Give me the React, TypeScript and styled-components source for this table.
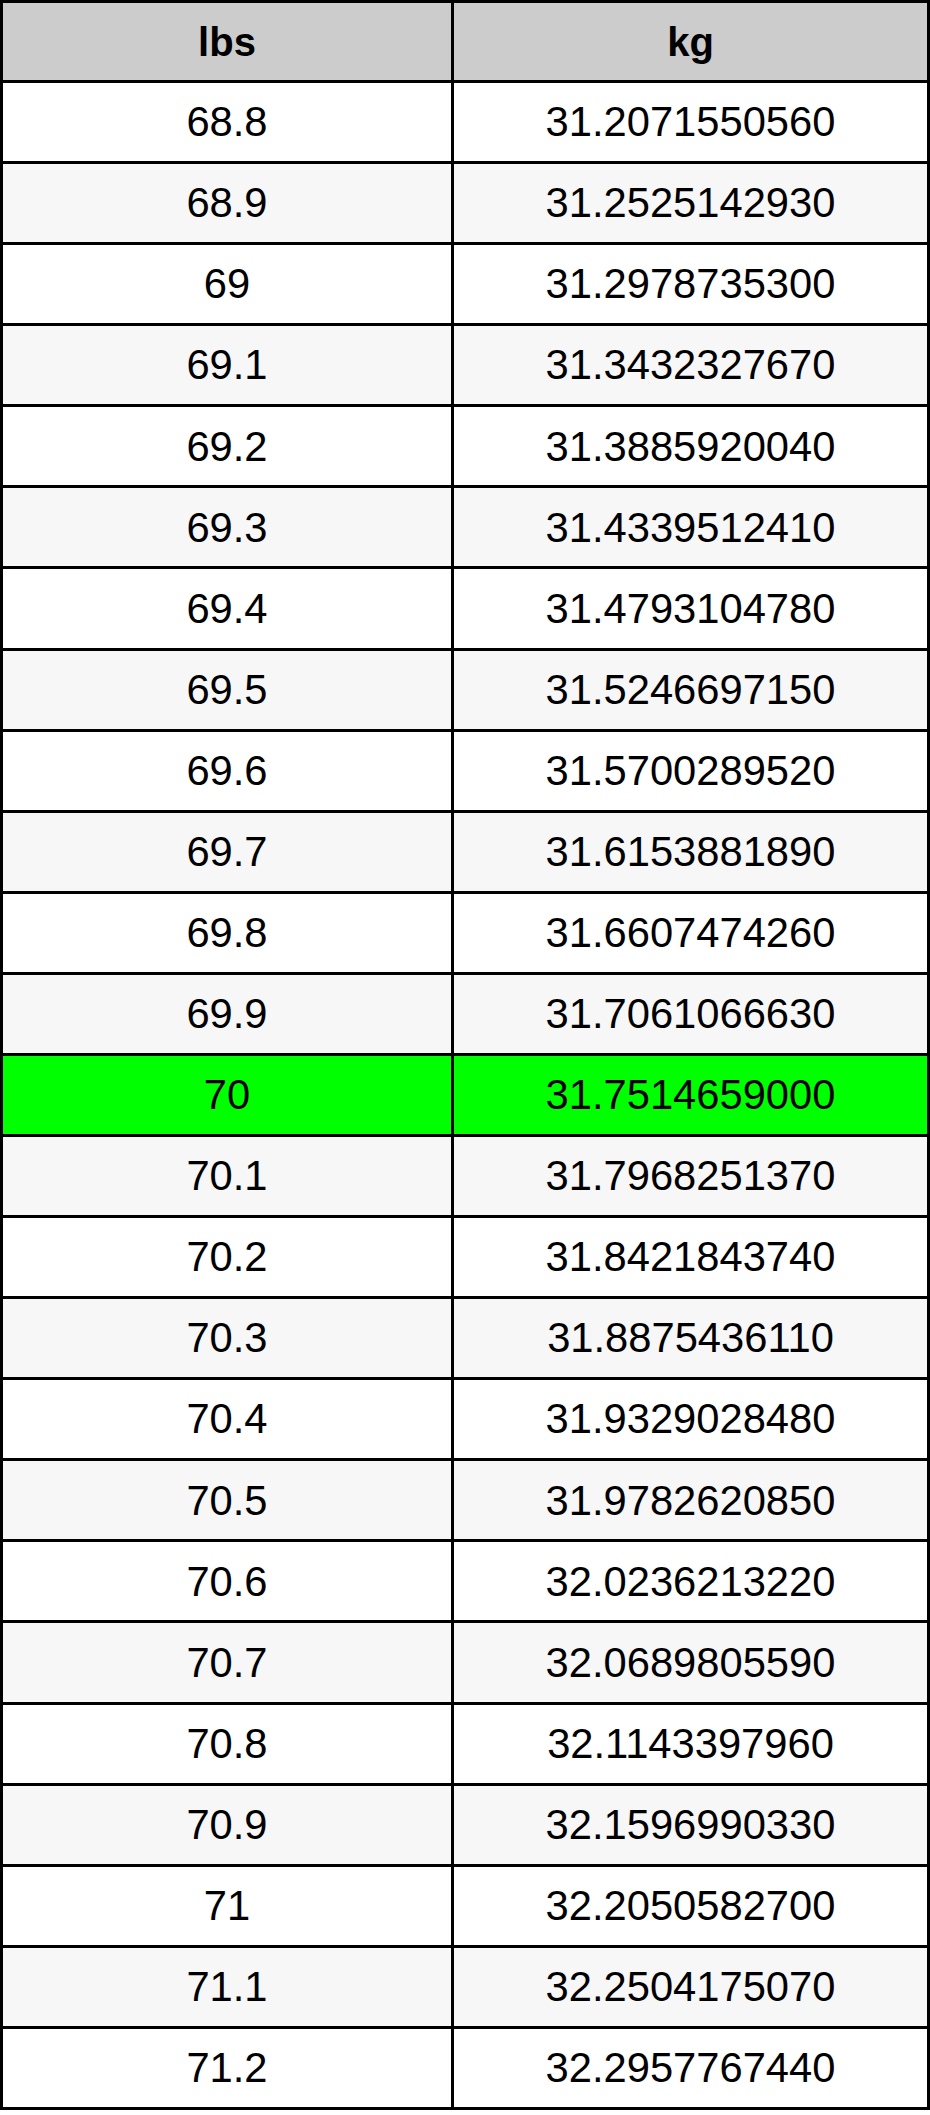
import React from "react";
import styled, { createGlobalStyle } from "styled-components";

const Global = createGlobalStyle`
  html, body { margin: 0; padding: 0; background: #fff; }
  body { font-family: "Liberation Sans", Arial, sans-serif; color: #000; }
`;

const Table = styled.div`
  width: 930px;
  box-sizing: border-box;
  border-top: 3px solid #000;
  border-left: 3px solid #000;
  display: flex;
  flex-direction: column;
`;

const Row = styled.div<{ $bg: string; $head?: boolean }>`
  display: grid;
  grid-template-columns: 451px 476px;
  height: ${(p) => (p.$head ? "80px" : "81.08px")};
  background: ${(p) => p.$bg};
`;

const Cell = styled.div<{ $head?: boolean }>`
  box-sizing: border-box;
  border-right: 3px solid #000;
  border-bottom: 3px solid #000;
  display: flex;
  align-items: center;
  justify-content: center;
  font-size: ${(p) => (p.$head ? "40px" : "41.7px")};
  font-weight: ${(p) => (p.$head ? 700 : 400)};
  line-height: 1;
`;

const rows: [string, string][] = [
  ["68.8", "31.2071550560"],
  ["68.9", "31.2525142930"],
  ["69", "31.2978735300"],
  ["69.1", "31.3432327670"],
  ["69.2", "31.3885920040"],
  ["69.3", "31.4339512410"],
  ["69.4", "31.4793104780"],
  ["69.5", "31.5246697150"],
  ["69.6", "31.5700289520"],
  ["69.7", "31.6153881890"],
  ["69.8", "31.6607474260"],
  ["69.9", "31.7061066630"],
  ["70", "31.7514659000"],
  ["70.1", "31.7968251370"],
  ["70.2", "31.8421843740"],
  ["70.3", "31.8875436110"],
  ["70.4", "31.9329028480"],
  ["70.5", "31.9782620850"],
  ["70.6", "32.0236213220"],
  ["70.7", "32.0689805590"],
  ["70.8", "32.1143397960"],
  ["70.9", "32.1596990330"],
  ["71", "32.2050582700"],
  ["71.1", "32.2504175070"],
  ["71.2", "32.2957767440"],
];

export default function App() {
  return (
    <>
      <Global />
      <Table>
        <Row $bg="#cccccc" $head>
          <Cell $head>lbs</Cell>
          <Cell $head>kg</Cell>
        </Row>
        {rows.map(([a, b], i) => (
          <Row key={a} $bg={a === "70" ? "#00ff00" : i % 2 === 0 ? "#ffffff" : "#f7f7f7"}>
            <Cell>{a}</Cell>
            <Cell>{b}</Cell>
          </Row>
        ))}
      </Table>
    </>
  );
}
